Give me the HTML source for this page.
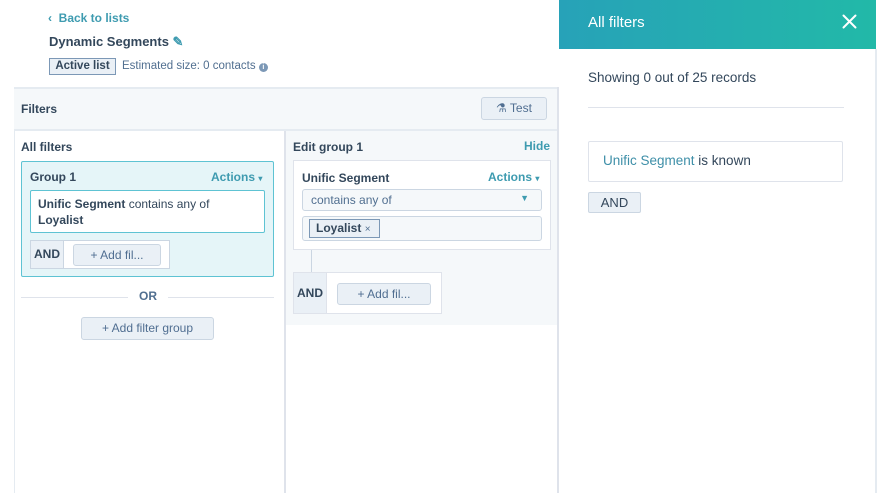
<!DOCTYPE html>
<html><head><style>
*{box-sizing:border-box;margin:0;padding:0}
body{width:885px;height:498px;position:relative;background:#fff;font-family:"Liberation Sans",sans-serif;color:#33475b;font-size:12px;overflow:hidden}
.a{position:absolute}
.btn{position:absolute;background:#eaf0f6;border:1px solid #cbd6e2;border-radius:3px;color:#506e91;font-size:12px;text-align:center}
b{font-weight:bold}
</style></head><body>
<div class="a" style="left:48px;top:11px;font-size:12px;color:#3e9bb0;font-weight:bold">‹&nbsp;&nbsp;Back to lists</div>
<div class="a" style="left:49px;top:34px;font-size:13px;font-weight:bold">Dynamic Segments <span style="color:#3e9bb0">✎</span></div>
<div class="a" style="left:49px;top:58px;width:67px;height:17px;border:1px solid #7c98b6;background:#eaf0f6;font-size:11.5px;font-weight:bold;text-align:center;line-height:15px">Active list</div>
<div class="a" style="left:122px;top:60px;font-size:11.5px;color:#516f90">Estimated size: 0 contacts <span style="display:inline-block;width:9px;height:9px;border-radius:50%;background:#7c98b6;color:#fff;font-size:7px;text-align:center;line-height:9px;font-weight:bold">i</span></div>

<div class="a" style="left:14px;top:87px;width:545px;height:44px;background:#f5f8fa;border-top:2px solid #e5ebf1;border-bottom:2px solid #e5ebf1"></div>
<div class="a" style="left:21px;top:102px;font-size:12px;font-weight:bold">Filters</div>
<div class="btn" style="left:481px;top:97px;width:66px;height:23px;line-height:21px">⚗ Test</div>

<div class="a" style="left:14px;top:131px;width:1px;height:362px;background:#e5ebf1"></div>
<div class="a" style="left:284px;top:131px;width:2px;height:362px;background:#dfe3eb"></div>
<div class="a" style="left:286px;top:131px;width:272px;height:194px;background:#f5f8fa"></div>
<div class="a" style="left:557px;top:87px;width:2px;height:406px;background:#dfe3eb"></div>

<div class="a" style="left:21px;top:140px;font-weight:bold">All filters</div>
<div class="a" style="left:21px;top:161px;width:253px;height:116px;border:1.5px solid #5ec3d3;background:#e5f5f8;border-radius:2px"></div>
<div class="a" style="left:30px;top:170px;font-weight:bold">Group 1</div>
<div class="a" style="left:211px;top:170px;color:#3e9bb0;font-weight:bold">Actions <span style="font-size:8px">▾</span></div>
<div class="a" style="left:30px;top:190px;width:235px;height:43px;background:#fff;border:1.5px solid #5ec3d3;border-radius:2px;padding:5px 7px;font-size:12px;line-height:16px"><b>Unific Segment</b> contains any of<br><b>Loyalist</b></div>
<div class="a" style="left:30px;top:240px;width:140px;height:29px;border:1px solid #cbd6e2;background:#fff"></div>
<div class="a" style="left:31px;top:241px;width:33px;height:27px;background:#eaf0f6;border-right:1px solid #cbd6e2;font-weight:bold;line-height:26px;text-align:center">AND</div>
<div class="btn" style="left:73px;top:244px;width:88px;height:22px;line-height:20px">+ Add fil...</div>
<div class="a" style="left:21px;top:297px;width:253px;height:1px;background:#dfe3eb"></div>
<div class="a" style="left:128px;top:289px;width:40px;background:#fff;text-align:center;font-weight:bold;color:#516f90">OR</div>
<div class="btn" style="left:81px;top:317px;width:133px;height:23px;line-height:21px">+ Add filter group</div>

<div class="a" style="left:293px;top:140px;font-weight:bold">Edit group 1</div>
<div class="a" style="left:524px;top:139px;color:#3e9bb0;font-weight:bold">Hide</div>
<div class="a" style="left:293px;top:160px;width:258px;height:90px;background:#fff;border:1px solid #dfe3eb"></div>
<div class="a" style="left:302px;top:171px;font-weight:bold">Unific Segment</div>
<div class="a" style="left:488px;top:170px;color:#3e9bb0;font-weight:bold">Actions <span style="font-size:8px">▾</span></div>
<div class="a" style="left:302px;top:189px;width:240px;height:22px;background:#f5f8fa;border:1px solid #cbd6e2;border-radius:3px;padding:3px 8px;color:#516f90">contains any of<span style="position:absolute;right:12px;top:3px;color:#3e9bb0;font-size:9px">▼</span></div>
<div class="a" style="left:302px;top:216px;width:240px;height:25px;background:#f5f8fa;border:1px solid #cbd6e2;border-radius:3px"></div>
<div class="a" style="left:309px;top:219px;width:71px;height:19px;border:1px solid #7c98b6;background:#eaf0f6;font-weight:bold;padding-left:6px;line-height:17px">Loyalist <span style="font-weight:normal;font-size:10px;color:#516f90">×</span></div>
<div class="a" style="left:311px;top:250px;width:1px;height:22px;background:#cbd6e2"></div>
<div class="a" style="left:293px;top:272px;width:149px;height:42px;border:1px solid #dfe3eb;background:#fff"></div>
<div class="a" style="left:294px;top:273px;width:33px;height:40px;background:#eaf0f6;border-right:1px solid #dfe3eb;font-weight:bold;line-height:40px;text-align:center">AND</div>
<div class="btn" style="left:337px;top:283px;width:94px;height:22px;line-height:20px">+ Add fil...</div>

<div class="a" style="left:559px;top:0;width:317px;height:49px;background:linear-gradient(90deg,#27a2b8,#22b9a8)"></div>
<div class="a" style="left:588px;top:14px;color:#fff;font-size:15px">All filters</div>
<svg class="a" style="left:842px;top:14px" width="15" height="15" viewBox="0 0 15 15"><path d="M1.5 1.5L13.5 13.5M13.5 1.5L1.5 13.5" stroke="#fff" stroke-width="2" stroke-linecap="round"/></svg>
<div class="a" style="left:875px;top:49px;width:2px;height:444px;background:#e5ebf1"></div>
<div class="a" style="left:588px;top:70px;font-size:13.5px">Showing 0 out of 25 records</div>
<div class="a" style="left:588px;top:107px;width:256px;height:1px;background:#dfe3eb"></div>
<div class="a" style="left:588px;top:141px;width:255px;height:41px;border:1px solid #dfe3eb;border-radius:2px;padding:11px 14px;font-size:13.5px"><span style="color:#3e8fa8">Unific Segment</span> is known</div>
<div class="a" style="left:588px;top:192px;width:53px;height:21px;background:#eaf0f6;border:1px solid #cbd6e2;border-radius:2px;text-align:center;line-height:19px;font-size:13px">AND</div>
</body></html>
